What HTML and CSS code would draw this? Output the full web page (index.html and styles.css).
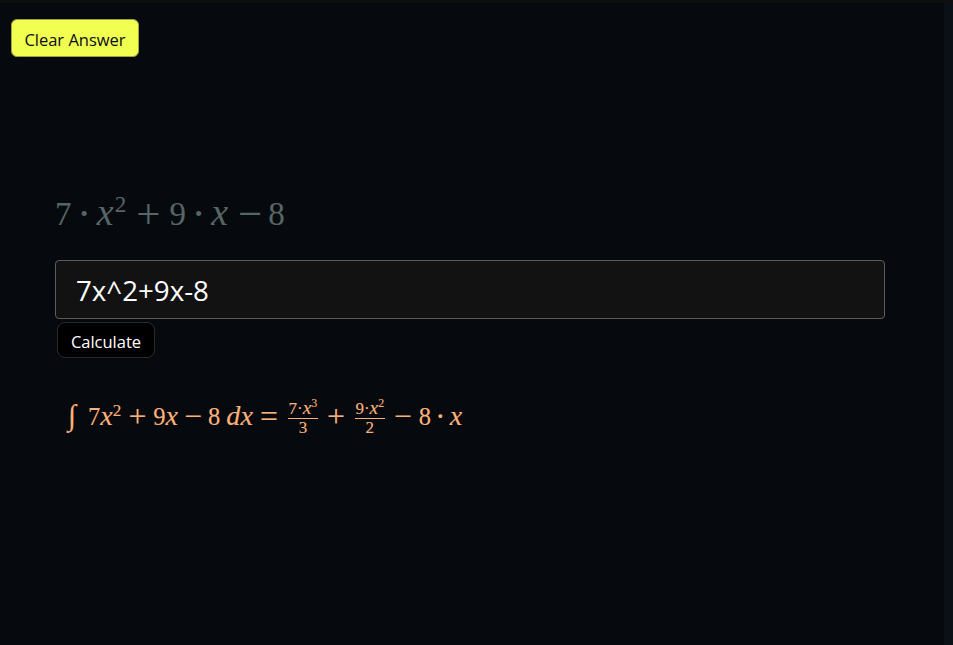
FILE: index.html
```html
<!DOCTYPE html>
<html lang="en">
<head>
  <meta charset="UTF-8" />
  <meta name="viewport" content="width=device-width, initial-scale=1.0"/>
  <title>Integral Calculator</title>
  <link rel="stylesheet" href="styles.css">
</head>
<body>
  <div class="page">
    <main class="content">
      <button class="clear-btn">Clear Answer</button>

      <section class="calculator">
        <div class="preview math"><span>7</span><span class="op dot">·</span><i>x</i><sup>2</sup><span class="op">+</span><span>9</span><span class="op dot">·</span><i>x</i><span class="op minus">−</span><span>8</span></div>

        <input class="expr-input" type="text" value="7x^2+9x-8">
        <button class="calc-btn">Calculate</button>

        <div class="answer math"><i class="int">∫</i><span>7</span><i>x</i><sup>2</sup><span class="op">+</span><span>9</span><i>x</i><span class="op minus">−</span><span>8</span><i class="dx">dx</i><span class="op">=</span><span class="frac"><span class="num">7·<i>x</i><sup>3</sup></span><span class="den">3</span></span><span class="op">+</span><span class="frac"><span class="num">9·<i>x</i><sup>2</sup></span><span class="den">2</span></span><span class="op">−</span><span>8</span><span class="op dot">·</span><i>x</i></div>
      </section>
    </main>
    <div class="scrollbar"></div>
  </div>
</body>
</html>
```

FILE: styles.css
```css
* {
  box-sizing: border-box;
}

body {
  margin: 0;
  background-color: #060a0f;
  font-family: "Open Sans", "Noto Sans", sans-serif;
}

.page {
  display: flex;
  height: 645px;
  border-top: 3px solid #0e0f10;
  overflow: hidden;
}

.content {
  flex: 1;
  padding: 16px 0 0 11px;
}

.scrollbar {
  width: 9px;
  background-color: #0b1016;
}

.clear-btn {
  display: block;
  width: 128px;
  height: 38px;
  padding: 3px 0 0;
  background-color: #f0ff50;
  border: 1px solid #9da33f;
  border-radius: 6px;
  color: #0b0d18;
  font-family: inherit;
  font-size: 16.5px;
}

.calculator {
  width: 830px;
  margin-left: 44px;
}

.math {
  font-family: "Liberation Serif", serif;
  white-space: nowrap;
}

.math i {
  font-size: 1.15em;
  font-style: italic;
}

.math sup {
  font-size: 0.7em;
  line-height: 0;
  vertical-align: 0.55em;
}

.preview {
  height: 40px;
  margin-top: 135px;
  margin-bottom: 28px;
  color: #566664;
  font-size: 33px;
  line-height: 40px;
}

.preview .op {
  margin: 0 9px 0 10px;
  font-size: 1.3em;
  line-height: 0;
  vertical-align: -3px;
}

.preview .dot {
  margin: 0 5.5px;
}

.preview .minus {
  margin-right: 6px;
}

.preview sup {
  margin-left: 1px;
}

.expr-input {
  display: block;
  width: 830px;
  height: 59px;
  padding: 0 20px;
  background-color: #121212;
  border: 1px solid #5c5c5c;
  border-radius: 4px;
  color: #fff;
  font-family: inherit;
  font-size: 27.7px;
  outline: none;
}

.calc-btn {
  display: block;
  width: 98px;
  height: 36px;
  margin: 3px 0 0 2px;
  padding: 2px 0 0;
  background-color: #000;
  border: 1px solid #2a2a2a;
  border-radius: 8px;
  color: #fff;
  font-family: inherit;
  font-size: 16.5px;
}

.answer {
  height: 50px;
  margin: 33px 0 0 13px;
  color: #fbb27a;
  font-size: 24.5px;
  line-height: 50px;
  -webkit-text-stroke: 0.12px #fbb27a;
}

.answer .op {
  margin: 0 7px;
  font-size: 1.3em;
  line-height: 0;
  vertical-align: -2px;
}

.answer .minus {
  margin: 0 6px;
}

.answer .dot {
  margin: 0 4px;
}

.answer .int {
  margin-right: 12px;
  font-size: 1.2em;
  line-height: 0;
}

.answer .dx {
  margin-left: 6px;
}

.frac {
  display: inline-flex;
  flex-direction: column;
  align-items: center;
  width: 30px;
  margin: 0 2px 0 3px;
  font-size: 17px;
  line-height: 17px;
  vertical-align: 11px;
}

.frac .num {
  width: 100%;
  padding-bottom: 1px;
  border-bottom: 1px solid #fbb27a;
  text-align: center;
}
```
